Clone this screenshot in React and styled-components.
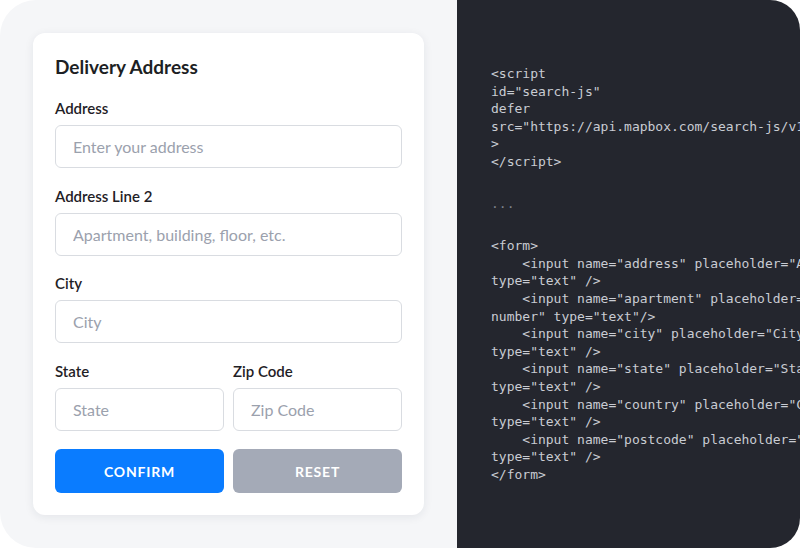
import React from "react";
import styled, { createGlobalStyle } from "styled-components";

const Global = createGlobalStyle`
  html, body {
    margin: 0;
    padding: 0;
    background: #ffffff;
  }
  * { box-sizing: border-box; }
`;

const Frame = styled.div`
  width: 800px;
  height: 548px;
  display: grid;
  grid-template-columns: 457px 1fr;
  border-radius: 36px 30px 30px 36px;
  overflow: hidden;
  font-family: Lato, "Open Sans", sans-serif;
`;

const Preview = styled.section`
  background: #f5f6f8;
  padding: 33px 33px 0 33px;
`;

const Card = styled.form`
  width: 391px;
  background: #ffffff;
  border-radius: 12px;
  box-shadow: 0 2px 10px rgba(30, 40, 60, 0.08);
  padding: 22px;
  display: flex;
  flex-direction: column;
  gap: 18.5px;
`;

const Title = styled.h2`
  margin: 0 0 1.5px;
  font-size: 19px;
  line-height: 24px;
  font-weight: 700;
  color: #1d1f24;
`;

const Field = styled.label`
  display: flex;
  flex-direction: column;
  gap: 8px;
  min-width: 0;
`;

const LabelText = styled.span`
  font-size: 15px;
  line-height: 18px;
  font-weight: 600;
  color: #1f2126;
`;

const Input = styled.input`
  height: 43px;
  width: 100%;
  border: 1px solid #d9dce1;
  border-radius: 6px;
  padding: 0 17px;
  font-family: inherit;
  font-size: 16px;
  color: #1f2126;
  background: #fff;
  outline: none;
  &::placeholder {
    color: #9ba1ad;
  }
`;

const Row = styled.div`
  display: grid;
  grid-template-columns: 1fr 1fr;
  gap: 9px;
`;

const Button = styled.button`
  height: 44px;
  border: none;
  border-radius: 6px;
  background: ${(p) => (p.$muted ? "#a4aab7" : "#0a7cff")};
  color: #ffffff;
  font-family: inherit;
  font-size: 14px;
  font-weight: 700;
  letter-spacing: 0.8px;
  text-transform: uppercase;
  cursor: pointer;
`;

const CodePanel = styled.section`
  background: #24262e;
  padding: 65px 0 0 34px;
  overflow: hidden;
`;

const Code = styled.pre`
  margin: 0 0 24.5px;
  font-family: "DejaVu Sans Mono", "Liberation Mono", monospace;
  font-size: 13px;
  line-height: 17.6px;
  color: ${(p) => (p.$dim ? "#7d818b" : "#c9ccd3")};
  white-space: pre;
`;

const scriptLines = `<script
id="search-js"
defer
src="https://api.mapbox.com/search-js/v1
>
</script>`;

const formLines = `<form>
    <input name="address" placeholder="A
type="text" />
    <input name="apartment" placeholder=
number" type="text"/>
    <input name="city" placeholder="City
type="text" />
    <input name="state" placeholder="Sta
type="text" />
    <input name="country" placeholder="C
type="text" />
    <input name="postcode" placeholder="
type="text" />
</form>`;

export default function App() {
  return (
    <>
      <Global />
      <Frame>
        <Preview>
          <Card onSubmit={(e) => e.preventDefault()}>
            <Title>Delivery Address</Title>
            <Field>
              <LabelText>Address</LabelText>
              <Input placeholder="Enter your address" />
            </Field>
            <Field>
              <LabelText>Address Line 2</LabelText>
              <Input placeholder="Apartment, building, floor, etc." />
            </Field>
            <Field>
              <LabelText>City</LabelText>
              <Input placeholder="City" />
            </Field>
            <Row>
              <Field>
                <LabelText>State</LabelText>
                <Input placeholder="State" />
              </Field>
              <Field>
                <LabelText>Zip Code</LabelText>
                <Input placeholder="Zip Code" />
              </Field>
            </Row>
            <Row>
              <Button type="submit">Confirm</Button>
              <Button type="reset" $muted>
                Reset
              </Button>
            </Row>
          </Card>
        </Preview>
        <CodePanel>
          <Code>{scriptLines}</Code>
          <Code $dim>...</Code>
          <Code>{formLines}</Code>
        </CodePanel>
      </Frame>
    </>
  );
}
